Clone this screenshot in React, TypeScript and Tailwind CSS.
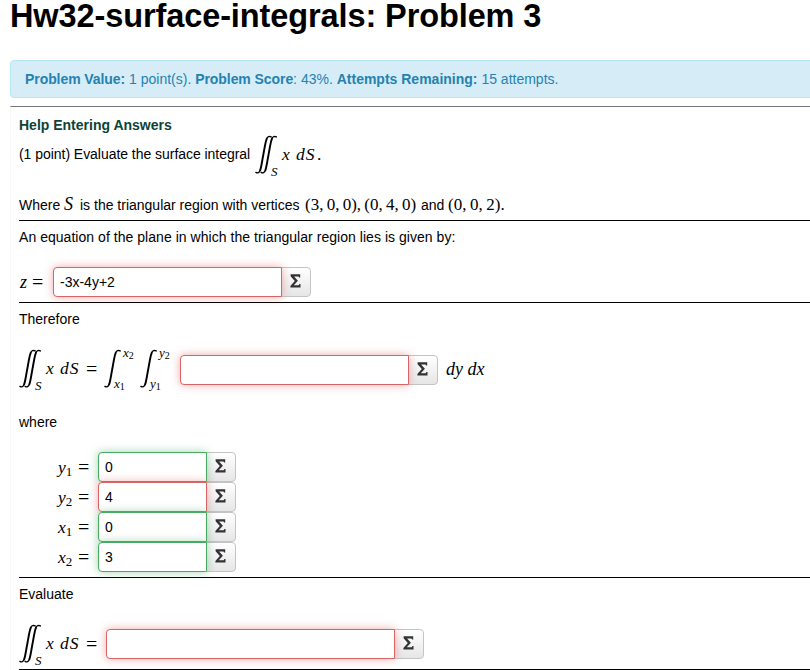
import type { ReactNode } from "react";

const serif = "font-['Liberation_Serif',serif] tracking-normal";

function Integral({ double = false }: { double?: boolean }) {
  const stroke = (
    <>
      <path d="M5.2 35.2 C6.2 32.5 6.8 28 7.9 22 L9.9 11 C10.4 8 10.9 5.6 11.7 3.8" strokeWidth="1.9" />
      <path d="M0.9 37.4 C2.6 38.4 4.3 37.8 5.2 35.2" strokeWidth="1.4" />
      <path d="M11.7 3.8 C12.5 1.6 14.4 1 16.2 1.9" strokeWidth="1.4" />
    </>
  );
  return (
    <svg
      className={double ? "block h-10 w-[23px] shrink-0" : "block h-10 w-[19px] shrink-0"}
      viewBox={double ? "0 0 23 40" : "0 0 19 40"}
      fill="none"
      stroke="#000"
      strokeLinecap="round"
    >
      {stroke}
      {double && <g transform="translate(5.2 0)">{stroke}</g>}
    </svg>
  );
}

function Sub({ children }: { children: ReactNode }) {
  return <span className="relative top-[3px] text-[13px] not-italic">{children}</span>;
}

function LimitSub({ children }: { children: ReactNode }) {
  return <span className="relative top-[2px] text-[10px] not-italic">{children}</span>;
}

function SurfaceIntegral() {
  return (
    <div className={`${serif} flex h-10 shrink-0 text-[17.5px] italic`}>
      <Integral double />
      <span className="-ml-[7px] mt-[29px] w-[11px] text-[13px] leading-[16px]">S</span>
      <span className="mt-[9px] w-[14px] leading-[20px]">x</span>
      <span className="mt-[9px] w-[21px] leading-[20px] tracking-[1px]">dS</span>
    </div>
  );
}

function Answer({ value = "", width, correct = false }: { value?: string; width: string; correct?: boolean }) {
  const tone = correct
    ? "border-[#45ac61] shadow-[0_0_8px_rgba(70,170,90,0.5)]"
    : "border-[#d96466] shadow-[0_0_8px_rgba(225,90,90,0.5)]";
  return (
    <div className="flex h-[30px] shrink-0">
      <input
        type="text"
        defaultValue={value}
        className={`${width} ${tone} relative z-10 h-[30px] rounded-l-[4px] border bg-white px-[6px] text-[14px] text-black outline-none`}
      />
      <button
        type="button"
        className="-ml-px flex h-[30px] w-[30px] items-center justify-center rounded-r-[4px] border border-[#c4c4c4] bg-linear-to-b from-white to-[#e6e6e6]"
      >
        <svg className="mb-[2px] mr-px h-[14px] w-[11px]" viewBox="0 0 11 14" fill="#333">
          <path d="M0.6 0.3H10.2V3.6H9C8.9 2.8 8.6 2.5 7.8 2.5H4.1L7.9 6.8L3.8 11.3H8.1C8.9 11.3 9.2 11 9.3 10.1H10.5V13.6H0.4V12L4.8 7.1L0.6 2.2Z" />
        </svg>
      </button>
    </div>
  );
}

const bounds = [
  { name: "y", index: 1, value: "0", correct: true },
  { name: "y", index: 2, value: "4", correct: false },
  { name: "x", index: 1, value: "0", correct: true },
  { name: "x", index: 2, value: "3", correct: true },
];

export default function App() {
  return (
    <div className="h-[670px] w-[810px] overflow-hidden bg-white pl-[10px] font-['Liberation_Sans',Arial,sans-serif] text-[14px] leading-[20px] text-black">
      <h1 className="h-[60px] whitespace-nowrap text-[32.5px] font-bold leading-[32px] tracking-[-0.1px]">
        Hw32-surface-integrals: Problem 3
      </h1>
      <div className="h-[38px] w-[840px] rounded-[4px] border border-[#b5e7f0] bg-[#d6edf8] pl-[14px] pt-[8px] text-[#2582b0]">
        <b className="tracking-[-0.07px]">Problem Value:</b> 1 point(s). <b className="tracking-[-0.07px]">Problem Score</b>: 43%.{" "}
        <b>Attempts Remaining:</b> 15 attempts.
      </div>
      <main className="mt-[8px] h-[564px] border-l border-t border-l-[#f7f7f7] border-t-[#777] pl-[8px]">
        <section className="h-[114px] border-b border-black pt-[8px]">
          <p className="font-bold text-[#0b4438]">Help Entering Answers</p>
          <div className="flex h-10">
            <span className="w-[236px] shrink-0 whitespace-nowrap pt-[9px] tracking-[-0.04px]">
              (1 point) Evaluate the surface integral
            </span>
            <SurfaceIntegral />
            <span className={`${serif} pt-[9px] text-[17.5px]`}>.</span>
          </div>
          <p className="mt-[19px] flex whitespace-nowrap">
            <span className="w-[45px] pt-px">Where</span>
            <span className={`${serif} w-[16px] text-[18px] italic`}>S</span>
            <span className="w-[225px] pt-px">is the triangular region with vertices</span>
            <span className={`${serif} w-[116px] pt-px text-[17px] [word-spacing:-1px]`}>(3, 0, 0), (0, 4, 0)</span>
            <span className="w-[27px] pt-px">and</span>
            <span className={`${serif} pt-px text-[17px] [word-spacing:-0.7px]`}>(0, 0, 2).</span>
          </p>
        </section>
        <section className="h-[82px] border-b border-black pt-[6px]">
          <p className="tracking-[0.04px]">
            An equation of the plane in which the triangular region lies is given by:
          </p>
          <div className="mt-[20px] flex">
            <span className={`${serif} w-[13px] pl-px pt-[5px] text-[18px] italic`}>z</span>
            <span className={`${serif} w-[21px] pt-[5px] text-[20px]`}>=</span>
            <Answer value="-3x-4y+2" width="w-[229px]" />
          </div>
        </section>
        <section className="h-[275px] border-b border-black pt-[6px]">
          <p>Therefore</p>
          <div className={`${serif} mt-[20px] flex h-10 text-[18px]`}>
            <SurfaceIntegral />
            <span className="ml-[5px] w-[18px] pt-[10px] text-[20px]">=</span>
            <Integral />
            <div className="flex w-[17px] flex-col justify-between text-[13px] italic leading-[12px]">
              <span className="-mt-[2px] whitespace-nowrap">x<LimitSub>2</LimitSub></span>
              <span className="-mb-[2px] -ml-[9px] whitespace-nowrap">x<LimitSub>1</LimitSub></span>
            </div>
            <Integral />
            <div className="flex w-[21px] flex-col justify-between text-[13px] italic leading-[12px]">
              <span className="-mt-[2px] whitespace-nowrap">y<LimitSub>2</LimitSub></span>
              <span className="-mb-[2px] -ml-[9px] whitespace-nowrap">y<LimitSub>1</LimitSub></span>
            </div>
            <div className="pt-[6px] font-['Liberation_Sans',Arial,sans-serif]">
              <Answer width="w-[229px]" />
            </div>
            <span className="pl-[8px] pt-[10px] italic">dy dx</span>
          </div>
          <p className="mt-[23px]">where</p>
          <div className="mt-[20px]">
            {bounds.map((b) => (
              <div key={b.name + b.index} className="flex h-[30px] pl-[39px]">
                <span className={`${serif} w-[20px] pt-[5px] text-[17.5px] italic`}>
                  {b.name}
                  <Sub>{b.index}</Sub>
                </span>
                <span className={`${serif} w-[20px] pt-[5px] text-[20px]`}>=</span>
                <Answer value={b.value} width="w-[109px]" correct={b.correct} />
              </div>
            ))}
          </div>
        </section>
        <section className="h-[92px] border-b border-black pt-[6px]">
          <p>Evaluate</p>
          <div className={`${serif} mt-[20px] flex h-10 text-[18px]`}>
            <SurfaceIntegral />
            <span className="ml-[5px] w-[20px] pt-[10px] text-[20px]">=</span>
            <div className="pt-[5px] font-['Liberation_Sans',Arial,sans-serif]">
              <Answer width="w-[289px]" />
            </div>
          </div>
        </section>
      </main>
    </div>
  );
}
